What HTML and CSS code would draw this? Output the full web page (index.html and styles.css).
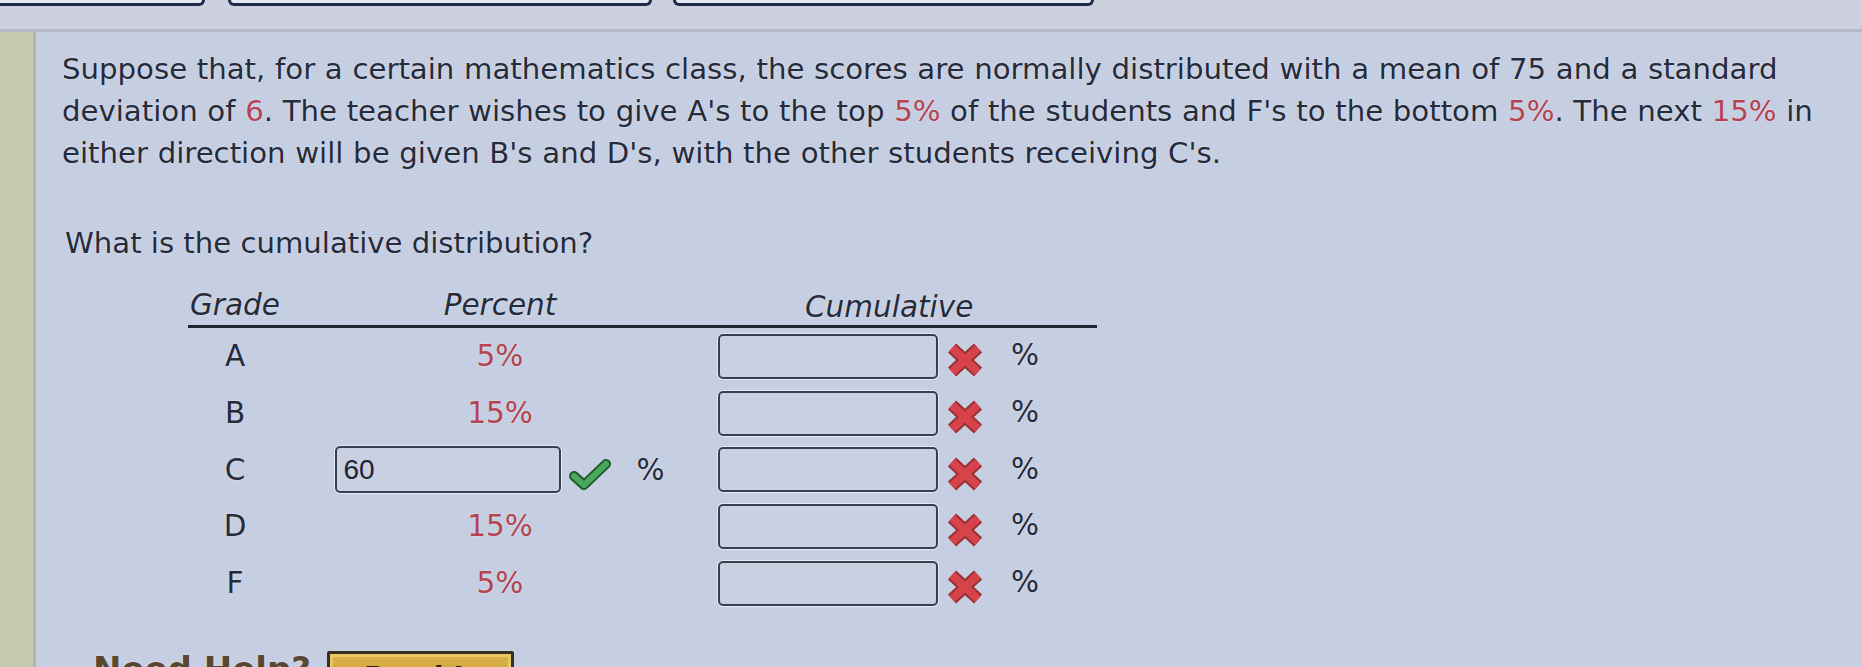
FILE: index.html
```html
<!DOCTYPE html>
<html lang="en">
<head>
<meta charset="utf-8">
<title>Cumulative distribution</title>
<link rel="stylesheet" href="styles.css">
</head>
<body>
<div class="topbar">
  <div class="tab tab-1"></div>
  <div class="tab tab-2"></div>
  <div class="tab tab-3"></div>
</div>
<div class="page">
  <div class="side-strip"></div>
  <main class="content">
    <p class="problem">Suppose that, for a certain mathematics class, the scores are normally distributed with a mean of 75 and a standard deviation of <span class="given">6</span>. The teacher wishes to give A's to the top <span class="given">5%</span> of the students and F's to the bottom <span class="given">5%</span>. The next <span class="given">15%</span> in either direction will be given B's and D's, with the other students receiving C's.</p>
    <p class="question">What is the cumulative distribution?</p>

    <div class="table">
      <div class="th th-grade">Grade</div>
      <div class="th th-percent">Percent</div>
      <div class="th th-cum">Cumulative</div>

      <div class="td grade">A</div>
      <div class="td pct"><span class="given">5%</span></div>
      <div class="td cum"><input class="box box-cum" type="text"><svg class="icon-x" viewBox="0 0 38 36"><path d="M6 6 L32 30 M32 6 L6 30" class="x-out"/><path d="M6 6 L32 30 M32 6 L6 30" class="x-in"/></svg><span class="unit">%</span></div>

      <div class="td grade">B</div>
      <div class="td pct"><span class="given">15%</span></div>
      <div class="td cum"><input class="box box-cum" type="text"><svg class="icon-x" viewBox="0 0 38 36"><path d="M6 6 L32 30 M32 6 L6 30" class="x-out"/><path d="M6 6 L32 30 M32 6 L6 30" class="x-in"/></svg><span class="unit">%</span></div>

      <div class="td grade">C</div>
      <div class="td pct"><input class="box box-pct" type="text" value="60"><svg class="icon-check" viewBox="0 0 42 32"><path d="M5 18 L15 27 L37 6" class="c-out"/><path d="M5 18 L15 27 L37 6" class="c-in"/></svg><span class="unit unit-pct">%</span></div>
      <div class="td cum"><input class="box box-cum" type="text"><svg class="icon-x" viewBox="0 0 38 36"><path d="M6 6 L32 30 M32 6 L6 30" class="x-out"/><path d="M6 6 L32 30 M32 6 L6 30" class="x-in"/></svg><span class="unit">%</span></div>

      <div class="td grade">D</div>
      <div class="td pct"><span class="given">15%</span></div>
      <div class="td cum"><input class="box box-cum" type="text"><svg class="icon-x" viewBox="0 0 38 36"><path d="M6 6 L32 30 M32 6 L6 30" class="x-out"/><path d="M6 6 L32 30 M32 6 L6 30" class="x-in"/></svg><span class="unit">%</span></div>

      <div class="td grade">F</div>
      <div class="td pct"><span class="given">5%</span></div>
      <div class="td cum"><input class="box box-cum" type="text"><svg class="icon-x" viewBox="0 0 38 36"><path d="M6 6 L32 30 M32 6 L6 30" class="x-out"/><path d="M6 6 L32 30 M32 6 L6 30" class="x-in"/></svg><span class="unit">%</span></div>
    </div>

    <div class="help">
      <span class="help-label">Need Help?</span>
      <button class="read-it" type="button">Read It</button>
    </div>
  </main>
</div>
</body>
</html>
```

FILE: styles.css
```css
html, body {
  margin: 0;
  padding: 0;
}
body {
  width: 1862px;
  height: 667px;
  overflow: hidden;
  background: #c6cde0;
  font-family: "DejaVu Sans", Verdana, sans-serif;
  color: #262b39;
}
.topbar {
  height: 29px;
  background: #ccd1dd;
  border-bottom: 3px solid #b4b9c6;
  display: flex;
  align-items: flex-start;
}
.tab {
  height: 3px;
  background: #e4e8f0;
  border: 3px solid #1e2b48;
  border-top: none;
  border-radius: 0 0 7px 7px;
}
.tab-1 { width: 205px; margin-left: -6px; }
.tab-2 { width: 418px; margin-left: 23px; }
.tab-3 { width: 415px; margin-left: 21px; }

.page {
  display: flex;
  height: 635px;
}
.side-strip {
  width: 33px;
  background: #c3caaf;
  border-right: 3px solid #b2b8b0;
  flex: none;
}
.content {
  flex: 1;
  background: #c6cee1;
  padding: 16px 0 0 26px;
  text-shadow: 0 0 2px rgba(240, 244, 255, 0.7);
}
.problem {
  margin: 0;
  font-size: 29.2px;
  line-height: 42px;
  width: 1790px;
  word-spacing: 0.4px;
}
.given {
  color: #b4444f;
}
.question {
  margin: 48px 0 0 3px;
  font-size: 29.15px;
  line-height: 42px;
}

.table {
  margin: 23px 0 0 126px;
  width: 909px;
  display: grid;
  grid-template-columns: 94px 436px 379px;
  grid-template-rows: 41px;
  grid-auto-rows: 56.7px;
  font-size: 29.5px;
}
.th {
  grid-row: 1;
  font-style: italic;
  height: 38px;
  line-height: 36px;
  border-bottom: 3px solid #1f2431;
}
.th-grade { padding-left: 2px; }
.th-percent { text-align: center; }
.th-cum { padding-left: 87px; line-height: 40px; }

.td {
  display: flex;
  align-items: center;
}
.grade { justify-content: center; }
.pct { justify-content: center; }
.cum { justify-content: flex-start; }

.box {
  box-sizing: border-box;
  border: 2px solid #3a3f4d;
  border-radius: 5px;
  background: #c9d0e2;
  font-family: "Liberation Sans", Arial, sans-serif;
  font-size: 28px;
  color: #1f2433;
  padding: 0 0 0 6px;
  margin: 0;
  box-shadow: 0 0 0 1px rgba(238, 242, 252, 0.8);
}
.box-pct { width: 226px; height: 47px; }
.box-cum { width: 220px; height: 45px; }

.icon-x {
  width: 38px;
  height: 36px;
  margin-left: 8px;
  margin-top: 8px;
}
.x-out { stroke: #9b2f35; stroke-width: 12; fill: none; }
.x-in { stroke: #d6434a; stroke-width: 8; fill: none; }

.icon-check {
  width: 42px;
  height: 32px;
  margin-left: 8px;
  margin-top: 8px;
}
.c-out { stroke: #1f5a2c; stroke-width: 10; fill: none; stroke-linejoin: round; stroke-linecap: round; }
.c-in { stroke: #4aa85a; stroke-width: 6; fill: none; stroke-linejoin: round; stroke-linecap: round; }

.unit {
  margin-left: 27px;
  margin-top: -2px;
}
.unit-pct { margin-left: 25px; margin-top: 0; }

.help {
  margin: 38px 0 0 31px;
  display: flex;
  align-items: flex-start;
}
.help-label {
  flex: none;
  width: 234px;
  white-space: nowrap;
  font-weight: bold;
  font-size: 34px;
  line-height: 40px;
  color: #5a4732;
}
.read-it {
  width: 187px;
  height: 46px;
  margin-top: 2px;
  border: 3px solid #35301f;
  border-radius: 2px;
  background: linear-gradient(#d9b24a, #c89c2c);
  box-shadow: inset 0 0 0 3px #e7c964;
  font-family: "DejaVu Sans", Verdana, sans-serif;
  font-weight: bold;
  font-size: 28px;
  color: #2d2414;
  padding: 6px 0 0 0;
  text-align: center;
}
```
